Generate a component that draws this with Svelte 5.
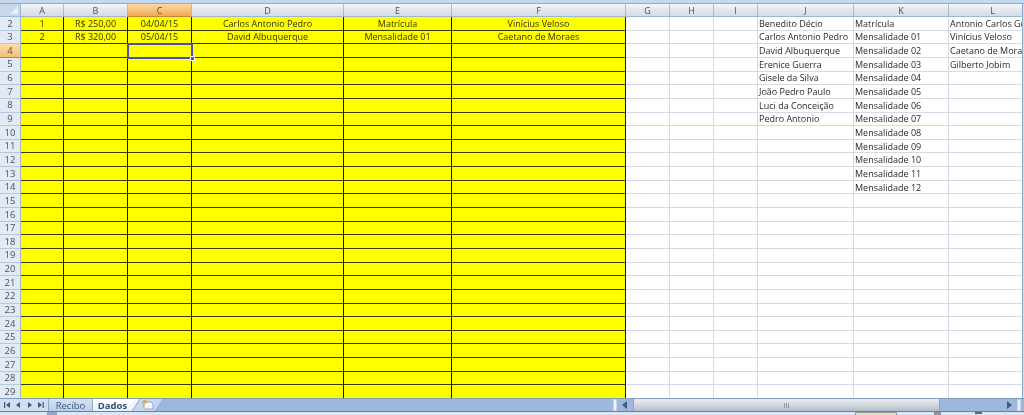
<script>
  const cols = ['A','B','C','D','E','F','G','H','I','J','K','L'];
  const data = {
    2: { A:'1', B:'R$ 250,00', C:'04/04/15', D:'Carlos Antonio Pedro', E:'Matrícula', F:'Vinícius Veloso', J:'Benedito Décio', K:'Matrícula', L:'Antonio Carlos Gomes' },
    3: { A:'2', B:'R$ 320,00', C:'05/04/15', D:'David Albuquerque', E:'Mensalidade 01', F:'Caetano de Moraes', J:'Carlos Antonio Pedro', K:'Mensalidade 01', L:'Vinícius Veloso' },
    4: { J:'David Albuquerque', K:'Mensalidade 02', L:'Caetano de Moraes' },
    5: { J:'Erenice Guerra', K:'Mensalidade 03', L:'Gilberto Jobim' },
    6: { J:'Gisele da Silva', K:'Mensalidade 04' },
    7: { J:'João Pedro Paulo', K:'Mensalidade 05' },
    8: { J:'Luci da Conceição', K:'Mensalidade 06' },
    9: { J:'Pedro Antonio', K:'Mensalidade 07' },
    10: { K:'Mensalidade 08' },
    11: { K:'Mensalidade 09' },
    12: { K:'Mensalidade 10' },
    13: { K:'Mensalidade 11' },
    14: { K:'Mensalidade 12' }
  };
  const rows = Array.from({ length: 28 }, (_, i) => i + 2);
  const yellow = ['A','B','C','D','E','F'];
</script>

<div class="window">
  <div class="topstrip"></div>
  <div class="sheetwrap">
    <div class="sheet">
      <div class="corner"><span class="tri"></span></div>
      {#each cols as c}
        <div class="colhead" class:active={c === 'C'}>{c}</div>
      {/each}
      {#each rows as r}
        <div class="rowhead" class:active={r === 4}>{r}</div>
        {#each cols as c}
          <div class="cell" class:y={yellow.includes(c)} class:sel={r === 4 && c === 'C'}>
            <span>{data[r]?.[c] ?? ''}</span>
          </div>
        {/each}
      {/each}
    </div>
  </div>
  <div class="tabbar">
    <div class="nav">
      <svg width="48" height="12" viewBox="0 0 48 12">
        <g fill="#3c5a82">
          <rect x="4" y="3" width="1.2" height="6"/><path d="M10 3v6L6 6z"/>
          <path d="M20 3v6l-4-3z"/>
          <path d="M28 3v6l4-3z"/>
          <path d="M38 3v6l4-3z"/><rect x="42.6" y="3" width="1.2" height="6"/>
        </g>
      </svg>
    </div>
    <div class="tab">Recibo</div>
    <div class="tab current">Dados</div>
    <svg class="newtab" width="31" height="12" viewBox="0 0 31 12">
      <path d="M0 0h8L0 12z" fill="#f2f6fc"/>
      <path d="M8 0h23l-8 12H0z" fill="#c6d7ee"/>
      <path d="M8 0L0 12" stroke="#7f9bc0" stroke-width="0.8" fill="none"/>
      <path d="M31 0l-8 12" stroke="#8fa9c8" stroke-width="0.8" fill="none"/>
      <path d="M12 3h7l2 2v5h-9z" fill="#f4f7fb" stroke="#8a9ab0" stroke-width="0.8"/>
      <path d="M10 3l3-2 2 2-3 2z" fill="#f0b850" stroke="#c88a20" stroke-width="0.5"/>
    </svg>
    <div class="fill"></div>
    <div class="split"></div>
    <div class="arrow left"><svg width="8" height="10" viewBox="0 0 8 10"><path d="M6 1v8L1 5z" fill="#3c5a82"/></svg></div>
    <div class="thumb"><span class="grip"></span></div>
    <div class="trough"></div>
    <div class="arrow right"><svg width="8" height="10" viewBox="0 0 8 10"><path d="M2 1v8l5-4z" fill="#3c5a82"/></svg></div>
    <div class="split end"></div>
  </div>
  <div class="status">
    <span class="st-icon a"></span>
    <span class="st-btn"></span>
    <span class="st-dot"></span>
    <span class="st-rect"></span>
  </div>
</div>

<style>
  :global(body) { margin: 0; background: #cfdef0; }
  .window {
    width: 1024px;
    height: 415px;
    display: flex;
    flex-direction: column;
    overflow: hidden;
    font-family: "Open Sans", "Noto Sans", sans-serif;
    font-size: 9px;
    color: #2a2a2a;
    background: #cfdef0;
    filter: blur(0.3px);
  }
  .topstrip {
    height: 3px;
    flex: none;
    background: #c5d8ee;
    border-bottom: 1px solid #8fa9c8;
  }
  .sheetwrap {
    flex: none;
    height: 394px;
    margin-right: 1px;
    overflow: hidden;
    background: #fff;
    border-right: 1px solid #8fa9c8;
    box-sizing: content-box;
    width: 1022px;
  }
  .sheet {
    width: 1036px;
    height: 395px;
    display: grid;
    grid-template-columns: 21px 43px 64px 64px 152px 108px 174px 44px 44px 44px 96px 95px 88px;
    grid-template-rows: 13px repeat(28, 1fr);
  }
  .corner {
    position: relative;
    background: #c7d8ec;
    border-right: 1px solid #9eb6ce;
    border-bottom: 1px solid #9eb6ce;
  }
  .tri {
    position: absolute;
    right: 2px;
    bottom: 2px;
    border-left: 8px solid transparent;
    border-bottom: 8px solid #e6eef8;
  }
  .colhead {
    display: flex;
    align-items: center;
    justify-content: center;
    min-width: 0;
    background: linear-gradient(#f4f7fb, #e2e8f0 45%, #d4dce8);
    border-right: 1px solid #a9bbd0;
    border-bottom: 1px solid #9eb6ce;
    color: #465260;
  }
  .colhead.active {
    background: linear-gradient(#f9d9a8, #f7c27c 50%, #f1a953);
    color: #5a4a30;
    border-bottom-color: #c28a30;
  }
  .rowhead {
    display: flex;
    align-items: center;
    justify-content: center;
    background: #e2eaf4;
    border-right: 1px solid #9eb6ce;
    border-bottom: 1px solid #b8c8dc;
    color: #465260;
    font-size: 9.5px;
    line-height: 1;
    min-height: 0;
  }
  .rowhead.active {
    background: linear-gradient(#fbdcae, #f6bd75);
    color: #5a4a30;
    border-bottom-color: #c28a30;
  }
  .cell {
    min-width: 0;
    min-height: 0;
    display: flex;
    align-items: center;
    padding-left: 1px;
    box-sizing: border-box;
    border-right: 1px solid #d4dbe8;
    border-bottom: 1px solid #d4dbe8;
    white-space: nowrap;
    overflow: hidden;
    line-height: 1;
    position: relative;
  }
  .cell.y {
    background: #ffff00;
    border-right-color: #1a1a00;
    border-bottom-color: #3a3a00;
    justify-content: center;
    padding-left: 0;
    color: #303010;
  }
  .cell.sel {
    overflow: visible;
    background: #ffff00;
    outline: 2px solid #4b50a8;
    outline-offset: -1px;
    z-index: 2;
  }
  .cell.sel::after {
    content: "";
    position: absolute;
    right: -4px;
    bottom: -4px;
    width: 5px;
    height: 5px;
    background: #4b50a8;
    border: 1px solid #fff;
    box-sizing: border-box;
  }
  .tabbar {
    flex: none;
    height: 12px;
    display: flex;
    align-items: stretch;
    background: #9db8dc;
    border-top: 1px solid #7f9bc0;
    border-bottom: 1px solid #5e81b0;
  }
  .nav {
    width: 48px;
    flex: none;
    display: flex;
    align-items: center;
    background: #cfdef0;
  }
  .tab {
    display: flex;
    align-items: center;
    justify-content: center;
    flex: none;
    width: 44px;
    color: #3c5a82;
    background: linear-gradient(#d4e2f3, #bccfe8);
    border-left: 1px solid #8fa9c8;
    box-sizing: border-box;
    font-size: 9.5px;
  }
  .tab.current {
    width: 40px;
    background: linear-gradient(#fff, #e8f0fa);
    font-weight: 700;
    color: #2f4f7a;
  }
  .newtab { flex: none; display: block; }
  .fill { flex: 1; }
  .split {
    width: 4px;
    flex: none;
    background: #eaf1fa;
    border: 1px solid #c7d6ea;
    box-sizing: border-box;
  }
  .split.end { margin-left: 1px; margin-right: 3px; }
  .arrow {
    flex: none;
    display: flex;
    align-items: center;
    justify-content: center;
  }
  .arrow.left { width: 16px; }
  .arrow.right { width: 14px; }
  .thumb {
    flex: none;
    width: 307px;
    display: flex;
    align-items: center;
    justify-content: center;
    background: linear-gradient(#e8ecf2, #d4d9e0 50%, #b4bcc8);
    border-left: 1px solid #8ea2bc;
    border-right: 1px solid #8ea2bc;
    box-sizing: border-box;
  }
  .grip {
    width: 5px;
    height: 5px;
    background: repeating-linear-gradient(90deg, #8a96a6 0 1px, transparent 1px 2px);
  }
  .trough { flex: none; width: 62px; }
  .status {
    flex: 1;
    position: relative;
    background: #d9e6f5;
    overflow: hidden;
  }
  .st-icon, .st-btn, .st-dot, .st-rect { position: absolute; top: 0; }
  .st-icon.a { left: 47px; width: 10px; height: 4px; background: #8ea9cc; }
  .st-btn { left: 855px; width: 42px; height: 4px; background: #eadfc4; border: 1px solid #8d9db0; box-sizing: border-box; }
  .st-dot { left: 934px; width: 7px; height: 3px; background: #8a96a6; }
  .st-rect { left: 975px; width: 7px; height: 2px; background: #5a6a80; }
</style>
